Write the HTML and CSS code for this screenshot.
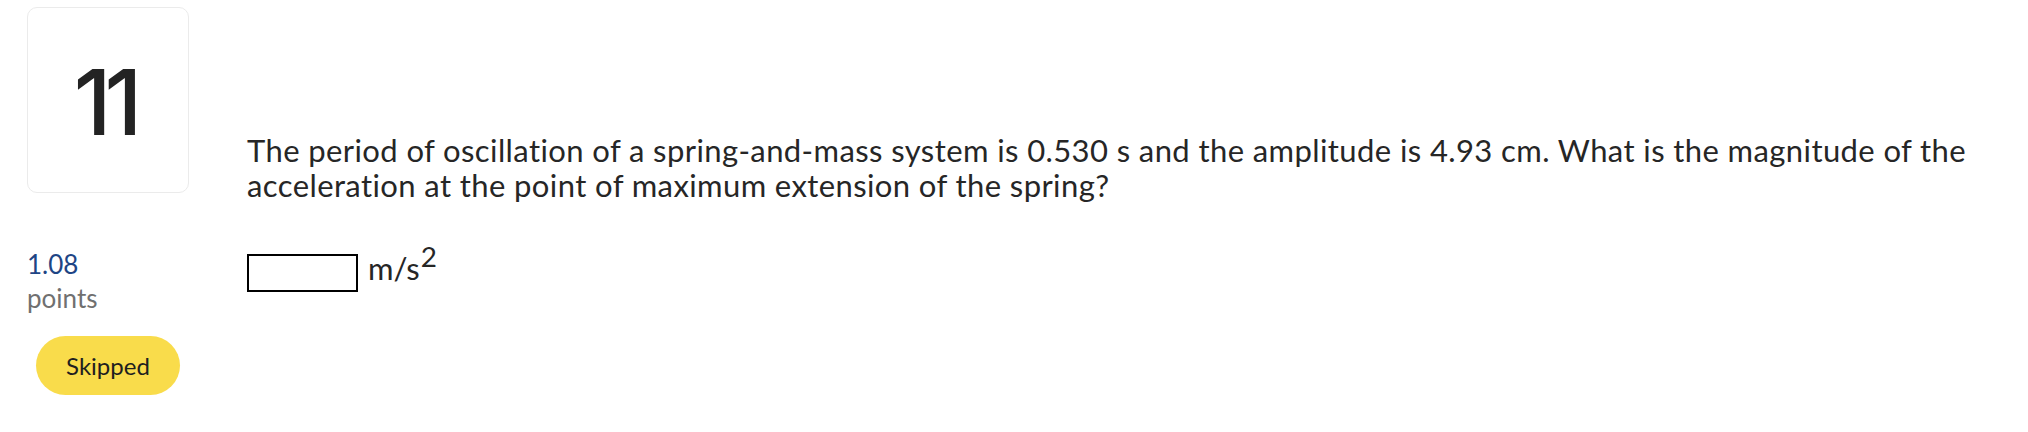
FILE: index.html
```html
<!DOCTYPE html>
<html lang="en">
<head>
<meta charset="utf-8">
<title>Question 11</title>
<link rel="stylesheet" href="styles.css">
</head>
<body>
<div class="question">
  <div class="meta">
    <div class="qnum">11</div>
    <div class="score">
      <div class="value">1.08</div>
      <div class="label">points</div>
    </div>
    <div class="status">Skipped</div>
  </div>
  <div class="content">
    <p class="prompt">The period of oscillation of a spring-and-mass system is 0.530 s and the amplitude is 4.93 cm. What is the magnitude of the acceleration at the point of maximum extension of the spring?</p>
    <div class="answer">
      <span class="field"></span>
      <span class="unit">m/s<sup>2</sup></span>
    </div>
  </div>
</div>
</body>
</html>
```

FILE: styles.css
```css
html, body {
  margin: 0;
  padding: 0;
  background: #ffffff;
}

body {
  font-family: "Lato", "Liberation Sans", sans-serif;
  font-variant-ligatures: none;
  color: #262626;
}

.question {
  display: flex;
  align-items: flex-start;
  gap: 58px;
  padding: 7px 0 0 27px;
}

.meta {
  width: 162px;
  flex: none;
  display: flex;
  flex-direction: column;
  align-items: flex-start;
}

.qnum {
  box-sizing: border-box;
  width: 162px;
  height: 186px;
  border: 1.5px solid #ebebeb;
  border-radius: 10px;
  display: flex;
  align-items: center;
  justify-content: center;
  font-family: "Inter", "Lato", sans-serif;
  font-size: 91px;
  font-weight: 500;
  letter-spacing: -7px;
  text-indent: -7px;
  color: #232323;
  padding-top: 4px;
}

.score {
  margin-top: 54px;
  font-size: 26px;
  line-height: 34px;
}

.value {
  color: #1e4585;
}

.label {
  color: #707070;
}

.status {
  margin: 21px 0 0 9px;
  width: 144px;
  height: 59px;
  border-radius: 30px;
  background: #f9dc4b;
  color: #1f1f1f;
  font-size: 24px;
  display: flex;
  align-items: center;
  justify-content: center;
}

.content {
  flex: 1;
  margin-top: 126px;
}

.prompt {
  margin: 0;
  font-size: 31px;
  line-height: 35px;
  letter-spacing: 0.4px;
}

.answer {
  display: flex;
  align-items: flex-start;
  gap: 10px;
  margin-top: 51px;
}

.field {
  box-sizing: border-box;
  width: 111px;
  height: 38px;
  border: 2px solid #000000;
}

.unit {
  font-size: 31px;
  line-height: 35px;
  margin-top: -3px;
}

.unit sup {
  font-size: 0.9em;
  line-height: 0;
  vertical-align: 13px;
  margin-left: 1px;
}
```
